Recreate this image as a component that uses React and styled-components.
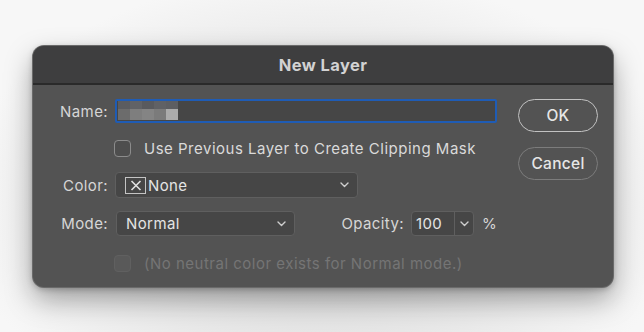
import React from "react";
import styled, { createGlobalStyle } from "styled-components";

const Global = createGlobalStyle`
  html, body { margin: 0; padding: 0; background: #f3f3f3; }
  body { font-family: Inter, "Noto Sans", sans-serif; }
  * { box-sizing: border-box; }
`;

const Page = styled.div`
  width: 644px;
  height: 332px;
  padding: 46px 0 0 33px;
  background: radial-gradient(ellipse at 50% 62%, #d2d2d2 0%, #ebebeb 55%, #f7f7f7 80%);
`;

const Dialog = styled.div`
  width: 580px;
  height: 241px;
  border-radius: 11px;
  background: #535353;
  box-shadow: 0 0 0 1px #6a6a6a, 0 12px 28px rgba(0, 0, 0, 0.35), 0 2px 6px rgba(0,0,0,0.25);
  overflow: hidden;
  display: flex;
  flex-direction: column;
`;

const TitleBar = styled.div`
  height: 39px;
  background: #3e3e3f;
  border-bottom: 2px solid #2a2a2a;
  display: flex;
  align-items: center;
  justify-content: center;
  color: #d2d2d2;
  font-size: 16.5px;
  letter-spacing: 0.4px;
  font-weight: 700;
  padding-top: 1px;
`;

const Body = styled.div`
  display: flex;
  padding-top: 14px;
`;

const Form = styled.div`
  width: 470px;
  display: flex;
  flex-direction: column;
`;

const Row = styled.div`
  display: flex;
  align-items: center;
  height: ${(p) => p.$h || 24}px;
  margin-top: ${(p) => p.$mt || 0}px;
`;

const Label = styled.div`
  width: ${(p) => p.$w || 75}px;
  text-align: right;
  color: #d6d6d6;
  font-size: 15px;
  letter-spacing: 0.4px;
  margin-right: ${(p) => p.$gap || 7}px;
  flex-shrink: 0;
`;

const NameInput = styled.div`
  width: 382px;
  height: 24px;
  background: #464646;
  border: 2px solid #1f5cb5;
  border-radius: 2px;
  padding: 0 0 0 1px;
  display: flex;
  align-items: stretch;
`;

const Mosaic = styled.div`
  display: grid;
  grid-template-columns: repeat(5, 12px);
  grid-template-rows: 8px 11px;
  filter: blur(0.4px);
`;

const Tile = styled.span`
  background: ${(p) => p.$c};
`;

const Check = styled.span`
  width: 17px;
  height: 17px;
  border-radius: 4px;
  border: 1px solid ${(p) => (p.$disabled ? "#606060" : "#8c8c8c")};
  background: ${(p) => (p.$disabled ? "#595959" : "#4e4e4e")};
  margin-left: 81px;
  margin-right: 13px;
  flex-shrink: 0;
`;

const CheckText = styled.span`
  font-size: 15px;
  letter-spacing: 0.5px;
  color: ${(p) => (p.$disabled ? "#757575" : "#dadada")};
  white-space: nowrap;
`;

const Select = styled.div`
  width: ${(p) => p.$w}px;
  height: ${(p) => p.$h || 26}px;
  background: #464646;
  border: 1px solid #5f5f5f;
  border-radius: 4px;
  display: flex;
  align-items: center;
  padding: 0 8px 0 9px;
  color: #e4e4e4;
  font-size: 15px;
  letter-spacing: 0.4px;
`;

const SelectValue = styled.span`
  flex: 1;
  display: flex;
  align-items: center;
`;

const NoneBox = styled.span`
  width: 21px;
  height: 17px;
  border: 1.5px solid #c4c4c4;
  display: inline-flex;
  align-items: center;
  justify-content: center;
  margin-right: 2px;
`;

const Opacity = styled.div`
  width: 63px;
  height: 25px;
  background: #464646;
  border: 1px solid #5f5f5f;
  border-radius: 4px;
  display: flex;
  align-items: stretch;
  color: #e4e4e4;
  font-size: 15px;
  letter-spacing: 0.4px;
`;

const OpacityValue = styled.span`
  width: 43px;
  display: flex;
  align-items: center;
  padding-left: 4px;
  border-right: 1px solid #5f5f5f;
`;

const OpacityArrow = styled.span`
  flex: 1;
  display: flex;
  align-items: center;
  justify-content: center;
`;

const Percent = styled.span`
  color: #d6d6d6;
  font-size: 15px;
  margin-left: 8px;
`;

const Buttons = styled.div`
  display: flex;
  flex-direction: column;
  gap: 15px;
  margin-left: 15px;
`;

const Button = styled.div`
  width: 80px;
  height: 33px;
  border-radius: 17px;
  border: 1.5px solid ${(p) => (p.$primary ? "#c2c2c2" : "#7c7c7c")};
  display: flex;
  align-items: center;
  justify-content: center;
  color: #e6e6e6;
  font-size: 15.5px;
  letter-spacing: 0.3px;
  font-weight: 500;
`;

const Chevron = () => (
  <svg width="9" height="6" viewBox="0 0 9 6">
    <path d="M1 1l3.5 3.5L8 1" fill="none" stroke="#cfcfcf" strokeWidth="1.4" strokeLinecap="round" strokeLinejoin="round" />
  </svg>
);

const mosaic = [
  "#5b5c60", "#616266", "#595a5e", "#606165", "#5d5e62",
  "#6c6c6c", "#7e7e7e", "#848484", "#7b7b7b", "#ababab",
];

export default function App() {
  return (
    <>
      <Global />
      <Page>
        <Dialog>
          <TitleBar>New Layer</TitleBar>
          <Body>
            <Form>
              <Row $h={24}>
                <Label>Name:</Label>
                <NameInput>
                  <Mosaic>
                    {mosaic.map((c, i) => (
                      <Tile key={i} $c={c} />
                    ))}
                  </Mosaic>
                </NameInput>
              </Row>
              <Row $h={24} $mt={13}>
                <Check />
                <CheckText>Use Previous Layer to Create Clipping Mask</CheckText>
              </Row>
              <Row $h={26} $mt={12}>
                <Label>Color:</Label>
                <Select $w={243}>
                  <SelectValue>
                    <NoneBox>
                      <svg width="12" height="11" viewBox="0 0 12 11">
                        <path d="M1.5 1l9 9M10.5 1l-9 9" stroke="#e0e0e0" strokeWidth="1.6" />
                      </svg>
                    </NoneBox>
                    None
                  </SelectValue>
                  <Chevron />
                </Select>
              </Row>
              <Row $h={25} $mt={13}>
                <Label $gap={8}>Mode:</Label>
                <Select $w={179} $h={25}>
                  <SelectValue>Normal</SelectValue>
                  <Chevron />
                </Select>
                <Label $gap={7} $w={109}>Opacity:</Label>
                <Opacity>
                  <OpacityValue>100</OpacityValue>
                  <OpacityArrow>
                    <Chevron />
                  </OpacityArrow>
                </Opacity>
                <Percent>%</Percent>
              </Row>
              <Row $h={24} $mt={15}>
                <Check $disabled />
                <CheckText $disabled>(No neutral color exists for Normal mode.)</CheckText>
              </Row>
            </Form>
            <Buttons>
              <Button $primary>OK</Button>
              <Button>Cancel</Button>
            </Buttons>
          </Body>
        </Dialog>
      </Page>
    </>
  );
}
